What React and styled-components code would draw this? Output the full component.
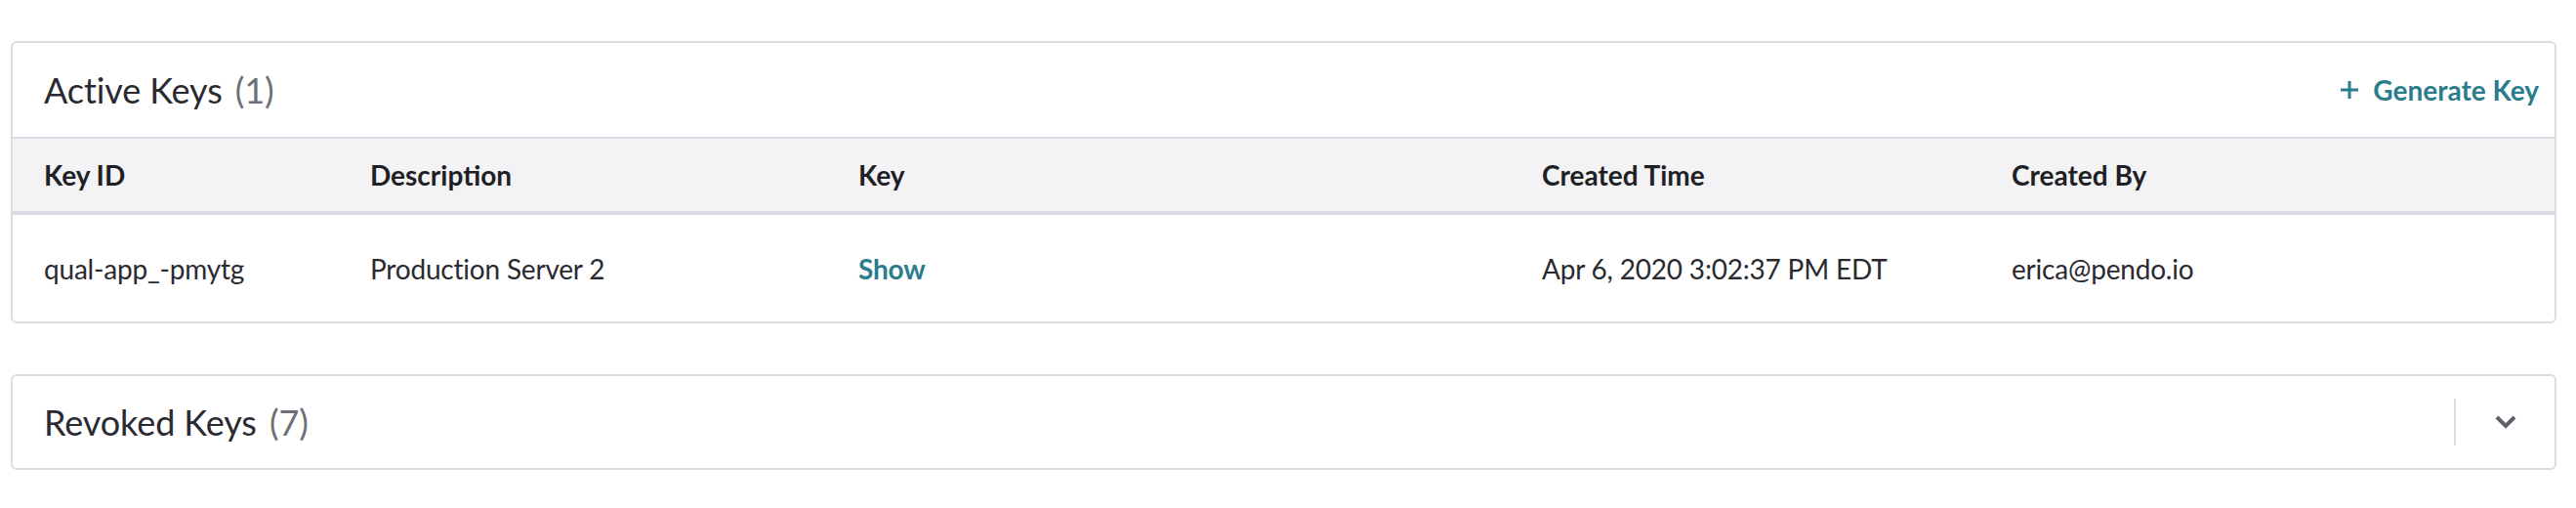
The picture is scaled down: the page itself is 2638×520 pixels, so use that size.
import React from 'react'
import styled, { createGlobalStyle } from 'styled-components'

const GlobalStyle = createGlobalStyle`
  html, body {
    margin: 0;
    padding: 0;
    background: #ffffff;
  }
  body {
    font-family: Lato, "Liberation Sans", sans-serif;
    color: #2a2a31;
  }
`

const keys = [
  {
    id: 'qual-app_-pmytg',
    description: 'Production Server 2',
    created: 'Apr 6, 2020 3:02:37 PM EDT',
    createdBy: 'erica@pendo.io',
  },
]

const columns = ['Key ID', 'Description', 'Key', 'Created Time', 'Created By']

const App = () => {
  return (
    <>
      <GlobalStyle />
      <Page>
        <Panel>
          <PanelHeader $height={96} $divided>
            <Title>
              Active Keys <Count>(1)</Count>
            </Title>
            <GenerateButton type="button">
              <PlusIcon />
              Generate Key
            </GenerateButton>
          </PanelHeader>

          <HeaderRow>
            {columns.map((c) => (
              <HeadCell key={c}>{c}</HeadCell>
            ))}
          </HeaderRow>

          {keys.map((k) => (
            <DataRow key={k.id}>
              <Cell>{k.id}</Cell>
              <Cell>{k.description}</Cell>
              <Cell>
                <ShowLink href="#">Show</ShowLink>
              </Cell>
              <Cell>{k.created}</Cell>
              <Cell>{k.createdBy}</Cell>
            </DataRow>
          ))}
        </Panel>

        <Panel>
          <PanelHeader $height={94}>
            <Title>
              Revoked Keys <Count>(7)</Count>
            </Title>
            <ToggleButton type="button" aria-label="Expand">
              <ChevronIcon />
            </ToggleButton>
          </PanelHeader>
        </Panel>
      </Page>
    </>
  )
}

const PlusIcon = () => (
  <svg width="20" height="20" viewBox="0 0 20 20" aria-hidden="true">
    <path d="M10 1v18M1 10h18" stroke="currentColor" strokeWidth="3" fill="none" />
  </svg>
)

const ChevronIcon = () => (
  <svg width="22" height="14" viewBox="0 0 22 14" aria-hidden="true">
    <polyline
      points="2,2 11,11 20,2"
      stroke="#5e6068"
      strokeWidth="4"
      fill="none"
      strokeLinejoin="miter"
    />
  </svg>
)

const Page = styled.div`
  padding: 42px 20px 0 11px;
  display: flex;
  flex-direction: column;
  gap: 52px;
`

const Panel = styled.section`
  border: 2px solid #dadce4;
  border-radius: 6px;
  background: #fff;
  overflow: hidden;
`

const PanelHeader = styled.div`
  height: ${({ $height }) => $height}px;
  display: flex;
  align-items: center;
  justify-content: space-between;
  padding-left: 32px;
  border-bottom: ${({ $divided }) => ($divided ? '2px solid #dadce4' : 'none')};
`

const Title = styled.h2`
  margin: 0;
  font-size: 36px;
  font-weight: 400;
  color: #2a2a31;
  letter-spacing: -0.1px;
`

const Count = styled.span`
  margin-left: 4px;
  color: #6d6f78;
`

const GenerateButton = styled.button`
  display: flex;
  align-items: center;
  gap: 14px;
  margin-right: 16px;
  padding: 0;
  border: none;
  background: none;
  font-family: inherit;
  font-size: 28px;
  font-weight: 700;
  color: #2b7d8c;
  cursor: pointer;
`

const ToggleButton = styled.button`
  width: 103px;
  height: 48px;
  display: flex;
  align-items: center;
  justify-content: center;
  padding: 0;
  border: none;
  border-left: 2px solid #dadce4;
  background: none;
  cursor: pointer;
`

const gridCols = '334px 500px 700px 481px 1fr'

const HeaderRow = styled.div`
  display: grid;
  grid-template-columns: ${gridCols};
  height: 74px;
  align-items: center;
  background: #f3f3f5;
  border-bottom: 4px solid #dadce4;
`

const HeadCell = styled.div`
  padding-left: 32px;
  font-size: 28px;
  font-weight: 700;
  color: #1f1f25;
`

const DataRow = styled.div`
  display: grid;
  grid-template-columns: ${gridCols};
  height: 109px;
  align-items: center;
`

const Cell = styled.div`
  padding-left: 32px;
  font-size: 28px;
  color: #2a2a31;
  letter-spacing: -0.2px;
`

const ShowLink = styled.a`
  color: #2b7d8c;
  font-weight: 700;
  text-decoration: none;
`

export default App
